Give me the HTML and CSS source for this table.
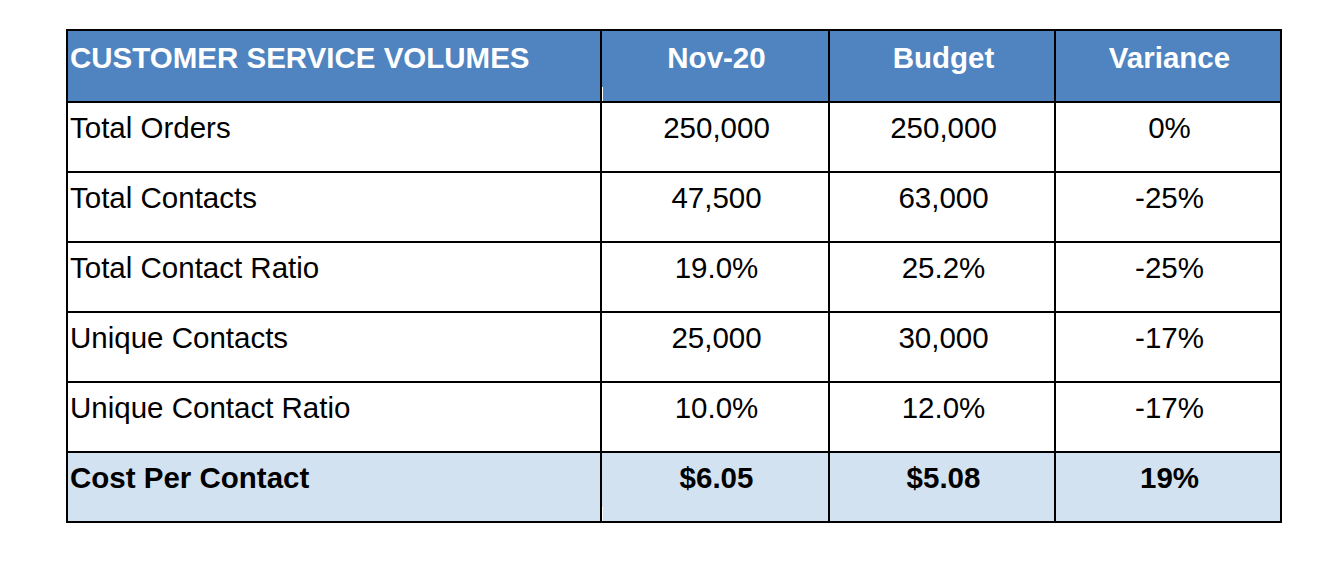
FILE: index.html
```html
<!DOCTYPE html>
<html>
<head>
<meta charset="utf-8">
<link rel="stylesheet" href="styles.css">
</head>
<body>
<div class="sheet">
  <div class="cell head label">CUSTOMER SERVICE VOLUMES</div>
  <div class="cell head num mark">Nov-20</div>
  <div class="cell head num">Budget</div>
  <div class="cell head num">Variance</div>

  <div class="cell label">Total Orders</div>
  <div class="cell num">250,000</div>
  <div class="cell num">250,000</div>
  <div class="cell num">0%</div>

  <div class="cell label">Total Contacts</div>
  <div class="cell num">47,500</div>
  <div class="cell num">63,000</div>
  <div class="cell num">-25%</div>

  <div class="cell label">Total Contact Ratio</div>
  <div class="cell num">19.0%</div>
  <div class="cell num">25.2%</div>
  <div class="cell num">-25%</div>

  <div class="cell label">Unique Contacts</div>
  <div class="cell num">25,000</div>
  <div class="cell num">30,000</div>
  <div class="cell num">-17%</div>

  <div class="cell label">Unique Contact Ratio</div>
  <div class="cell num">10.0%</div>
  <div class="cell num">12.0%</div>
  <div class="cell num">-17%</div>

  <div class="cell total label">Cost Per Contact</div>
  <div class="cell total num mark">$6.05</div>
  <div class="cell total num">$5.08</div>
  <div class="cell total num">19%</div>
</div>
</body>
</html>
```

FILE: styles.css
```css
html, body {
  margin: 0;
  padding: 0;
  background: #ffffff;
}

body {
  font-family: "Liberation Sans", Arial, sans-serif;
}

.sheet {
  margin: 29px 0 0 66px;
  width: max-content;
  display: grid;
  grid-template-columns: 532px 226px 224px 224px;
  grid-template-rows: 70px repeat(6, 68px);
  gap: 2px;
  padding: 2px;
  background: #000000;
}

.cell {
  position: relative;
  background: #ffffff;
  color: #000000;
  font-size: 29.5px;
  line-height: 34px;
  padding-top: 8px;
  white-space: nowrap;
}

.label {
  padding-left: 2px;
}

.num {
  text-align: center;
  padding-left: 3px;
}

.head {
  background: #4f84c0;
  color: #ffffff;
  font-weight: bold;
  padding-top: 10px;
}

.head.label {
  padding-left: 2px;
}

.total {
  background: #d3e2f1;
  font-weight: bold;
}

.mark::after {
  content: "";
  position: absolute;
  left: 0;
  bottom: 0;
  width: 1px;
  height: 14px;
  background: #ffffff;
}
```
